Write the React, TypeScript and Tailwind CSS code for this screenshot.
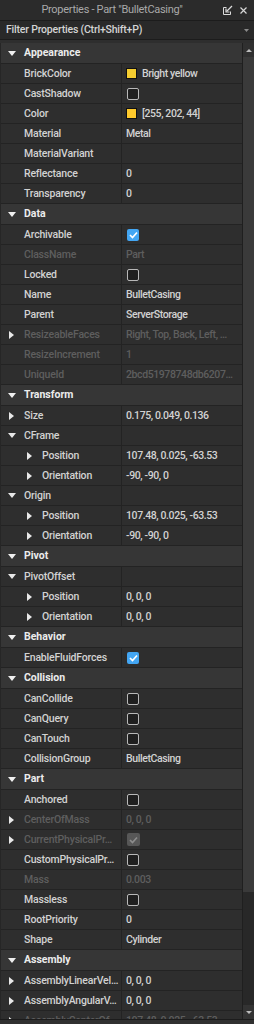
import React from "react";

type Row = {
  name: string;
  value?: string;
  swatch?: string;
  check?: "on" | "off" | "locked";
  arrow?: "right" | "down";
  depth?: number;
  disabled?: boolean;
};

type Section = { title: string; rows: Row[] };

const SECTIONS: Section[] = [
  {
    title: "Appearance",
    rows: [
      { name: "BrickColor", swatch: "#f5cd30", value: "Bright yellow" },
      { name: "CastShadow", check: "off" },
      { name: "Color", swatch: "#ffca2c", value: "[255, 202, 44]" },
      { name: "Material", value: "Metal" },
      { name: "MaterialVariant", value: "" },
      { name: "Reflectance", value: "0" },
      { name: "Transparency", value: "0" },
    ],
  },
  {
    title: "Data",
    rows: [
      { name: "Archivable", check: "on" },
      { name: "ClassName", value: "Part", disabled: true },
      { name: "Locked", check: "off" },
      { name: "Name", value: "BulletCasing" },
      { name: "Parent", value: "ServerStorage" },
      { name: "ResizeableFaces", value: "Right, Top, Back, Left, …", arrow: "right", disabled: true },
      { name: "ResizeIncrement", value: "1", disabled: true },
      { name: "UniqueId", value: "2bcd51978748db6207…", disabled: true },
    ],
  },
  {
    title: "Transform",
    rows: [
      { name: "Size", value: "0.175, 0.049, 0.136", arrow: "right" },
      { name: "CFrame", value: "", arrow: "down" },
      { name: "Position", value: "107.48, 0.025, -63.53", arrow: "right", depth: 1 },
      { name: "Orientation", value: "-90, -90, 0", arrow: "right", depth: 1 },
      { name: "Origin", value: "", arrow: "down" },
      { name: "Position", value: "107.48, 0.025, -63.53", arrow: "right", depth: 1 },
      { name: "Orientation", value: "-90, -90, 0", arrow: "right", depth: 1 },
    ],
  },
  {
    title: "Pivot",
    rows: [
      { name: "PivotOffset", value: "", arrow: "down" },
      { name: "Position", value: "0, 0, 0", arrow: "right", depth: 1 },
      { name: "Orientation", value: "0, 0, 0", arrow: "right", depth: 1 },
    ],
  },
  {
    title: "Behavior",
    rows: [{ name: "EnableFluidForces", check: "on" }],
  },
  {
    title: "Collision",
    rows: [
      { name: "CanCollide", check: "off" },
      { name: "CanQuery", check: "off" },
      { name: "CanTouch", check: "off" },
      { name: "CollisionGroup", value: "BulletCasing" },
    ],
  },
  {
    title: "Part",
    rows: [
      { name: "Anchored", check: "off" },
      { name: "CenterOfMass", value: "0, 0, 0", arrow: "right", disabled: true },
      { name: "CurrentPhysicalPr…", check: "locked", arrow: "right", disabled: true },
      { name: "CustomPhysicalPr…", check: "off" },
      { name: "Mass", value: "0.003", disabled: true },
      { name: "Massless", check: "off" },
      { name: "RootPriority", value: "0" },
      { name: "Shape", value: "Cylinder" },
    ],
  },
  {
    title: "Assembly",
    rows: [
      { name: "AssemblyLinearVel…", value: "0, 0, 0", arrow: "right" },
      { name: "AssemblyAngularV…", value: "0, 0, 0", arrow: "right" },
      { name: "AssemblyCenterOf…", value: "107.48, 0.025, -63.53", arrow: "right", disabled: true },
    ],
  },
];

function ArrowRight({ color = "#e8e8e8" }: { color?: string }) {
  return (
    <svg width="5" height="8" viewBox="0 0 5 8">
      <path d="M0 0 L5 4 L0 8 Z" fill={color} />
    </svg>
  );
}

function ArrowDown({ color = "#e8e8e8" }: { color?: string }) {
  return (
    <svg width="8" height="5" viewBox="0 0 8 5">
      <path d="M0 0 L8 0 L4 5 Z" fill={color} />
    </svg>
  );
}

function CheckBox({ state }: { state: "on" | "off" | "locked" }) {
  if (state === "off") {
    return <div className="ml-[1px] h-[12px] w-[12px] rounded-[2px] border border-[#b8b8b8] bg-[#1f1f1f]" />;
  }
  const locked = state === "locked";
  return (
    <div
      className={
        locked
          ? "ml-[1px] flex h-[13px] w-[13px] items-center justify-center rounded-[2px] bg-[#575757]"
          : "ml-[1px] flex h-[12px] w-[12px] items-center justify-center rounded-[2px] bg-[#43a6f3]"
      }
    >
      <svg width="9" height="8" viewBox="0 0 9 8">
        <path
          d="M1 4 L3.5 6.5 L8 1.5"
          fill="none"
          stroke={locked ? "#8c8c8c" : "#ffffff"}
          strokeWidth="1.7"
        />
      </svg>
    </div>
  );
}

function PropRow({ row }: { row: Row }) {
  const tone = row.disabled ? "text-[#5e5e5e]" : "text-[#d2d2d2]";
  return (
    <div className="flex h-[20px] shrink-0 border-b border-[#232323]">
      <div
        className={
          row.depth
            ? "flex w-[121px] shrink-0 items-center border-r border-[#232323] pl-[26px]"
            : "flex w-[121px] shrink-0 items-center border-r border-[#232323] pl-[8px]"
        }
      >
        <span className="flex w-[15px] shrink-0 items-center">
          {row.arrow === "right" && <ArrowRight />}
          {row.arrow === "down" && (
            <span className="-ml-[1px]">
              <ArrowDown />
            </span>
          )}
        </span>
        <span className={`whitespace-nowrap font-medium tracking-[-0.2px] ${tone}`}>{row.name}</span>
      </div>
      <div className="flex min-w-0 flex-1 items-center overflow-hidden pl-[4px]">
        {row.swatch && (
          <span
            className="mr-[5px] h-[11px] w-[11px] shrink-0 border border-[#111111]"
            style={{ backgroundColor: row.swatch }}
          />
        )}
        {row.check && <CheckBox state={row.check} />}
        {row.value && (
          <span className={`whitespace-nowrap font-medium tracking-[-0.4px] ${tone}`}>{row.value}</span>
        )}
      </div>
    </div>
  );
}

function SectionHeader({ title }: { title: string }) {
  return (
    <div className="flex h-[21px] shrink-0 items-center border-b border-[#232323] bg-[#363636] pl-[7px]">
      <span className="flex w-[16px] shrink-0 items-center">
        <ArrowDown color="#f0f0f0" />
      </span>
      <span className="font-bold text-[#ececec]">{title}</span>
    </div>
  );
}

export default function App() {
  return (
    <div className="flex h-[1024px] w-[254px] flex-col overflow-hidden bg-[#2e2e2e] font-['Roboto',sans-serif] text-[10.5px]">
      {/* title bar */}
      <div className="flex h-[20px] shrink-0 items-center bg-[#2b2b2b]">
        <div className="flex-1 pl-[4px] text-center text-[11px] tracking-[-0.3px] text-[#a9a9a9]">
          Properties - Part "BulletCasing"
        </div>
        <div className="flex w-[34px] shrink-0 items-center gap-[7px] pl-[2px]">
          <svg width="11" height="11" viewBox="0 0 11 11">
            <path d="M4.5 2.5 H1.5 V9.5 H8.5 V6.5" fill="none" stroke="#dcdcdc" strokeWidth="1" />
            <path d="M10 1 L4.5 6.5" stroke="#dcdcdc" strokeWidth="1.2" />
            <path d="M4 3.5 V7 H7.5" fill="none" stroke="#dcdcdc" strokeWidth="1.2" />
          </svg>
          <svg width="7" height="7" viewBox="0 0 7 7">
            <path d="M0.5 0.5 L6.5 6.5 M6.5 0.5 L0.5 6.5" stroke="#d6d6d6" strokeWidth="1.2" />
          </svg>
        </div>
      </div>

      {/* filter */}
      <div className="flex h-[20px] shrink-0 items-center border-y border-[#1c1c1c] bg-[#292929] pl-[6px] pr-[5px]">
        <span className="flex-1 font-medium tracking-[-0.2px] text-[#d4d4d4]">Filter Properties (Ctrl+Shift+P)</span>
        <svg width="5" height="3" viewBox="0 0 5 3">
          <path d="M0 0 L5 0 L2.5 3 Z" fill="#8a8a8a" />
        </svg>
      </div>

      <div className="h-[3px] shrink-0" />

      {/* property grid */}
      <div className="flex min-h-0 flex-1">
        <div className="flex min-w-0 flex-1 flex-col overflow-hidden border-l border-[#262626]">
          {SECTIONS.map((s) => (
            <React.Fragment key={s.title}>
              <SectionHeader title={s.title} />
              {s.rows.map((r, i) => (
                <PropRow key={s.title + i} row={r} />
              ))}
            </React.Fragment>
          ))}
        </div>

        {/* scrollbar */}
        <div className="flex w-[12px] shrink-0 flex-col border-l border-[#1f1f1f] bg-[#282828]">
          <div className="flex h-[14px] shrink-0 items-center justify-center bg-[#303030]">
            <svg width="6" height="3" viewBox="0 0 6 3">
              <path d="M0 3 L6 3 L3 0 Z" fill="#bdbdbd" />
            </svg>
          </div>
          <div className="h-[835px] shrink-0 bg-[#3a3a3a]" />
          <div className="flex-1" />
          <div className="flex h-[14px] shrink-0 items-center justify-center bg-[#333333]">
            <svg width="6" height="3" viewBox="0 0 6 3">
              <path d="M0 0 L6 0 L3 3 Z" fill="#bdbdbd" />
            </svg>
          </div>
        </div>
      </div>

      <div className="h-[5px] shrink-0 border-t border-[#1c1c1c] bg-[#303030]" />
    </div>
  );
}
